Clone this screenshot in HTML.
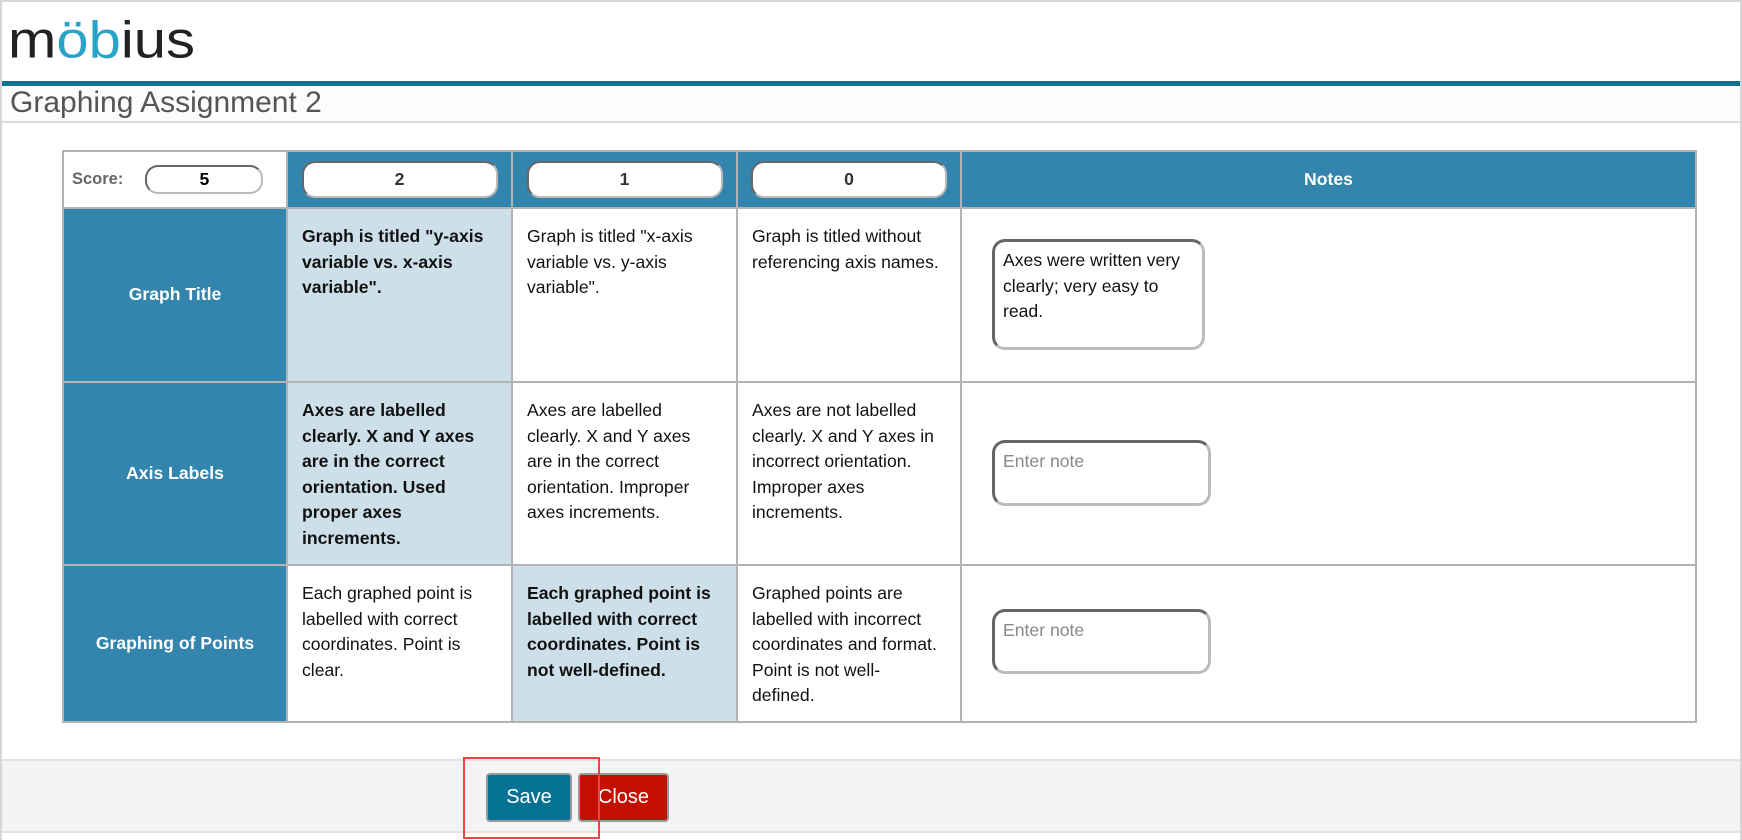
<!DOCTYPE html>
<html><head><meta charset="utf-8"><style>
*{box-sizing:border-box}
body{margin:0;width:1742px;height:840px;overflow:hidden;font-family:"Liberation Sans",Arial,sans-serif;background:#fff}
.frame{position:absolute;left:0;top:0;width:1742px;height:840px;border:2px solid #d6d6d6;border-bottom:none}
.logo{position:absolute;left:8px;top:10px;font-size:58px;font-weight:normal;letter-spacing:0px;color:#222;transform:scaleY(0.9);transform-origin:top left}
.logo .t{color:#2aa3c8}
.teal{position:absolute;left:2px;right:2px;top:81px;height:5px;background:#0a7393}
.title{position:absolute;left:2px;right:2px;top:86px;height:37px;background:#fcfcfc;border-bottom:2px solid #dcdcdc;font-size:30px;color:#555;padding-left:8px;line-height:34px}
table{position:absolute;left:62px;top:150px;border-collapse:collapse;table-layout:fixed}
td{border:2px solid #b3b3b3;padding:0;font-size:17.6px;line-height:25.5px;vertical-align:top;color:#111}
.h{background:#3385ad;color:#fff;font-weight:bold;text-align:center;vertical-align:middle}
.hl{background:#cde0ea;font-weight:bold}
.c{padding:15px 4px 0 14px;white-space:nowrap;overflow:hidden}
.pill{display:block;margin:0 auto;border-radius:13px;background:#fff;border:2px solid;border-color:#666 #bbb #bbb #666;text-align:center;font-weight:bold;color:#333;font-size:17.6px}
.ta{position:absolute;border-radius:13px;border:3px solid;border-color:#666 #bbb #bbb #666;background:#fff;padding:6px 8px;font-size:17.6px;line-height:25.5px;color:#111}
.ta.ph{color:#888}
.foot{position:absolute;left:2px;right:2px;top:759px;height:74px;background:#f4f4f4;border-top:2px solid #e2e2e2;border-bottom:2px solid #e2e2e2}
.btn{position:absolute;top:773px;height:49px;border:2px solid #999;border-radius:4px;color:#fff;font-size:20px;text-align:center;line-height:45px}
</style></head><body>
<div class="frame"></div>
<div class="logo">m<span class="t">öb</span>ius</div>
<div class="teal"></div>
<div class="title">Graphing Assignment 2</div>
<table>
<colgroup><col style="width:224px"><col style="width:225px"><col style="width:225px"><col style="width:224px"><col style="width:735px"></colgroup>
<tr style="height:57px">
<td style="vertical-align:middle;background:#fff"><div style="display:flex;align-items:center;padding-left:8px"><span style="font-weight:bold;color:#666;font-size:16.5px">Score:</span><span class="pill" style="width:118px;height:29px;line-height:25px;margin:0 0 0 22px;color:#000">5</span></div></td>
<td class="h"><span class="pill" style="width:196px;height:37px;line-height:33px">2</span></td>
<td class="h"><span class="pill" style="width:196px;height:37px;line-height:33px">1</span></td>
<td class="h"><span class="pill" style="width:196px;height:37px;line-height:33px">0</span></td>
<td class="h">Notes</td>
</tr>
<tr style="height:174px">
<td class="h">Graph Title</td>
<td class="hl c">Graph is titled "y-axis<br>variable vs. x-axis<br>variable".</td>
<td class="c">Graph is titled "x-axis<br>variable vs. y-axis<br>variable".</td>
<td class="c">Graph is titled without<br>referencing axis names.</td>
<td></td>
</tr>
<tr style="height:183px">
<td class="h">Axis Labels</td>
<td class="hl c">Axes are labelled<br>clearly. X and Y axes<br>are in the correct<br>orientation. Used<br>proper axes<br>increments.</td>
<td class="c">Axes are labelled<br>clearly. X and Y axes<br>are in the correct<br>orientation. Improper<br>axes increments.</td>
<td class="c">Axes are not labelled<br>clearly. X and Y axes in<br>incorrect orientation.<br>Improper axes<br>increments.</td>
<td></td>
</tr>
<tr style="height:157px">
<td class="h">Graphing of Points</td>
<td class="c">Each graphed point is<br>labelled with correct<br>coordinates. Point is<br>clear.</td>
<td class="hl c">Each graphed point is<br>labelled with correct<br>coordinates. Point is<br>not well-defined.</td>
<td class="c">Graphed points are<br>labelled with incorrect<br>coordinates and format.<br>Point is not well-<br>defined.</td>
<td></td>
</tr>
</table>
<div class="ta" style="left:992px;top:239px;width:213px;height:111px">Axes were written very<br>clearly; very easy to<br>read.</div>
<div class="ta ph" style="left:992px;top:440px;width:219px;height:66px">Enter note</div>
<div class="ta ph" style="left:992px;top:609px;width:219px;height:65px">Enter note</div>
<div class="foot"></div>
<div class="btn" style="left:486px;width:86px;background:#057293">Save</div>
<div class="btn" style="left:578px;width:91px;background:#c20f00">Close</div>
<div style="position:absolute;left:463px;top:757px;width:137px;height:82px;border:2px solid #f04444"></div>
</body></html>
